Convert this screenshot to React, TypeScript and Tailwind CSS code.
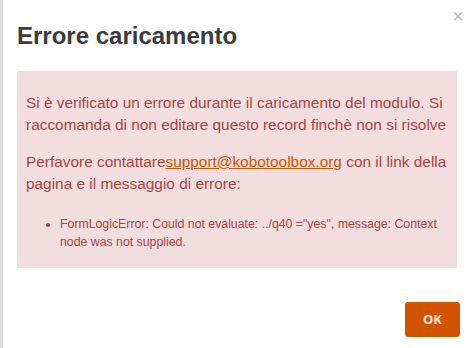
export default function App() {
  return (
    <div className="w-[474px] h-[348px] bg-[#dcdcdc] pl-[3px] font-['Liberation_Sans',Arial,sans-serif]">
      <div className="relative h-full bg-white pl-[14px] pr-[14px]">
        <button className="absolute right-[10px] top-[6px] text-[#b8b8b8] text-[20px] leading-none">
          ×
        </button>
        <h2 className="pt-[21px] text-[24px] font-bold leading-[30px] text-[#3c3c3c]">
          Errore caricamento
        </h2>
        <div className="mt-[20px] w-[440px] h-[197px] bg-[#f2dede] pl-[9px] pr-[8px] pt-[21px] text-[#a94442]">
          <p className="text-[15.4px] leading-[22px]">
            Si è verificato un errore durante il caricamento del modulo. Si raccomanda di non editare questo record finchè non si risolve
          </p>
          <p className="mt-[15px] text-[15.4px] leading-[22px]">
            Perfavore contattare
            <a className="text-[#d35400] underline" href="#">support@kobotoolbox.org</a> con il link della pagina e il
            messaggio di errore:
          </p>
          <ul className="mt-[20px] pl-[34px] list-disc text-[12.3px] leading-[18px]">
            <li>FormLogicError: Could not evaluate: ../q40 ="yes", message: Context node was not supplied.</li>
          </ul>
        </div>
        <div className="flex justify-end mt-[34px]">
          <button className="w-[55px] h-[35px] rounded-[3px] bg-[#d35400] text-[#fde6d6] text-[13px] font-bold font-['Open_Sans',sans-serif]">
            OK
          </button>
        </div>
      </div>
    </div>
  );
}
